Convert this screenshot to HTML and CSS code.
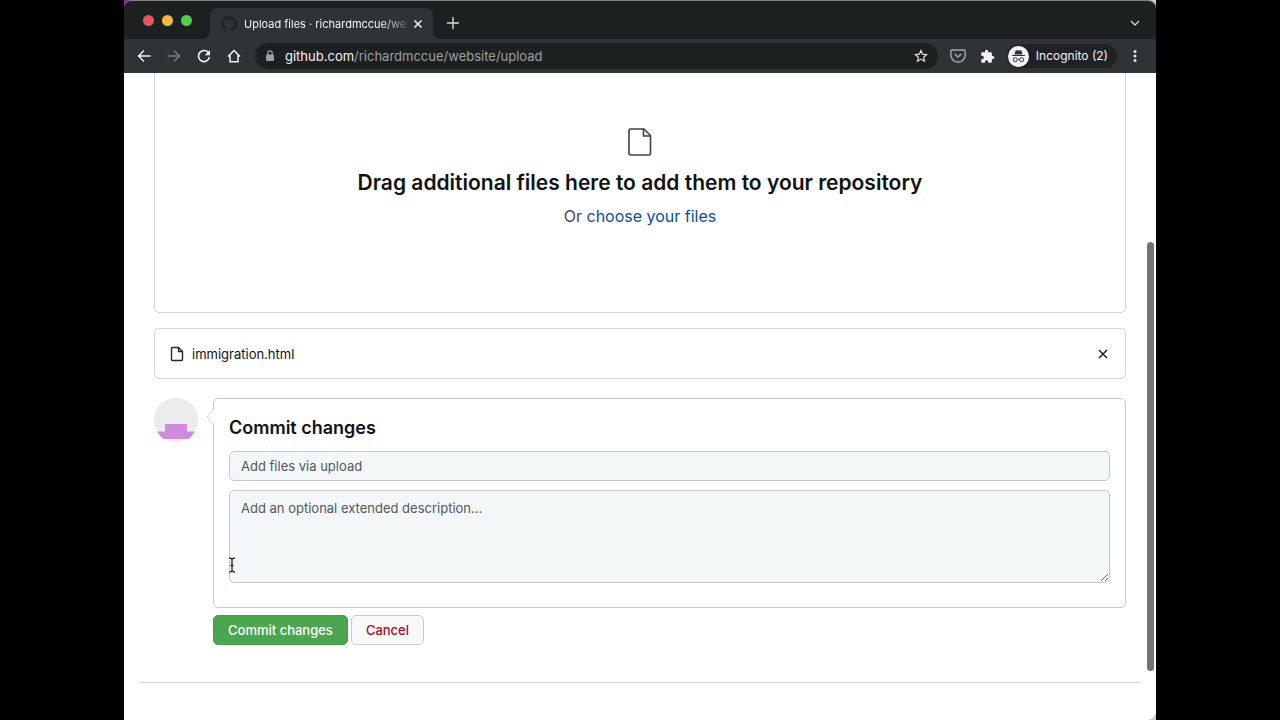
FILE: index.html
```html
<!DOCTYPE html>
<html lang="en">
<head>
    <meta charset="utf-8">
    <title>Upload files · richardmccue/website</title>
    <meta name="viewport" content="width=device-width, initial-scale=1">
    <link rel="stylesheet" href="styles.css">
</head>
<body>
    <div class="window">
        <header class="browser">
            <div class="tabstrip">
                <div class="lights">
                    <span class="light red"></span>
                    <span class="light yellow"></span>
                    <span class="light green"></span>
                </div>
                <div class="tab">
                    <svg class="favicon" width="16" height="16" viewBox="0 0 16 16"><path fill="#202426" d="M8 0C3.58 0 0 3.58 0 8c0 3.54 2.29 6.53 5.47 7.59.4.07.55-.17.55-.38 0-.19-.01-.82-.01-1.49-2.01.37-2.53-.49-2.69-.94-.09-.23-.48-.94-.82-1.13-.28-.15-.68-.52-.01-.53.63-.01 1.08.58 1.23.82.72 1.21 1.87.87 2.33.66.07-.52.28-.87.51-1.07-1.78-.2-3.64-.89-3.64-3.95 0-.87.31-1.59.82-2.15-.08-.2-.36-1.02.08-2.12 0 0 .67-.21 2.2.82.64-.18 1.32-.27 2-.27s1.36.09 2 .27c1.53-1.04 2.2-.82 2.2-.82.44 1.1.16 1.92.08 2.12.51.56.82 1.27.82 2.15 0 3.07-1.87 3.75-3.65 3.95.29.25.54.73.54 1.48 0 1.07-.01 1.93-.01 2.2 0 .21.15.46.55.38A8.01 8.01 0 0 0 16 8c0-4.42-3.58-8-8-8z"/></svg>
                    <span class="tab-title">Upload files · richardmccue/we</span>
                    <button class="icon-btn" type="button" aria-label="Close tab">
                        <svg width="10" height="10" viewBox="0 0 10 10"><path d="M1.500 1.500l7 7M8.500 1.500l-7 7" stroke="#f1f3f4" stroke-width="1.500"/></svg>
                    </button>
                </div>
                <button class="icon-btn new-tab" type="button" aria-label="New tab">
                    <svg width="12" height="12" viewBox="0 0 12 12"><path d="M6 0v12M0 6h12" stroke="#d8dadc" stroke-width="1.400"/></svg>
                </button>
                <button class="icon-btn tab-search" type="button" aria-label="Search tabs">
                    <svg width="10" height="6" viewBox="0 0 10 6"><path d="M1 1l4 4 4-4" fill="none" stroke="#d5d8da" stroke-width="1.300"/></svg>
                </button>
            </div>
            <div class="toolbar">
                <nav class="nav">
                    <button class="icon-btn" type="button" aria-label="Back">
                        <svg width="14" height="14" viewBox="0 0 14 14"><path d="M13.500 7H2M7 1.500L1.500 7 7 12.500" fill="none" stroke="#f1f3f4" stroke-width="1.400"/></svg>
                    </button>
                    <button class="icon-btn" type="button" aria-label="Forward">
                        <svg width="14" height="14" viewBox="0 0 14 14"><path d="M.5 7H12M7 1.500L12.500 7 7 12.500" fill="none" stroke="#7b7f82" stroke-width="1.300"/></svg>
                    </button>
                    <button class="icon-btn" type="button" aria-label="Reload">
                        <svg width="14" height="14" viewBox="0 0 14 14"><path d="M11.600 4A5.500 5.500 0 1 0 12.400 8.200" fill="none" stroke="#f1f3f4" stroke-width="1.600"/><path d="M13 1v5.200H7.800z" fill="#f1f3f4"/></svg>
                    </button>
                    <button class="icon-btn" type="button" aria-label="Home">
                        <svg width="14" height="14" viewBox="0 0 14 14"><path d="M1 7.500L7 1.500l6 6M3 6v6.700h8V6" fill="none" stroke="#f1f3f4" stroke-width="1.500"/></svg>
                    </button>
                </nav>
                <div class="address">
                    <svg width="8" height="12" viewBox="0 0 8 12"><rect y="4.500" width="8" height="6.500" rx="1" fill="#9da1a4"/><path d="M1.800 5V3a2.200 2.200 0 0 1 4.400 0v2" fill="none" stroke="#9da1a4" stroke-width="1.200"/></svg>
                    <span class="url"><span class="host">github.com</span>/richardmccue/website/upload</span>
                    <button class="icon-btn" type="button" aria-label="Bookmark this page">
                        <svg width="14" height="14" viewBox="0 0 14 14"><path d="M7 1.500l1.600 3.700 4 .4-3 2.700.9 3.900L7 10.100l-3.500 2.100.9-3.900-3-2.700 4-.4z" fill="none" stroke="#dfe1e3" stroke-width="1.200"/></svg>
                    </button>
                </div>
                <button class="icon-btn pocket" type="button" aria-label="Pocket">
                    <svg width="16" height="14" viewBox="0 0 16 14"><path d="M2 1h12q1.200 0 1.200 1.200V6A7.200 7 0 0 1 .8 6V2.200Q.8 1 2 1z" fill="none" stroke="#a5a9ac" stroke-width="1.400"/><path d="M4.800 5L8 8l3.200-3" fill="none" stroke="#a5a9ac" stroke-width="1.500"/></svg>
                </button>
                <button class="icon-btn" type="button" aria-label="Extensions">
                    <svg width="15" height="15" viewBox="0 0 24 24"><path fill="#f1f3f4" d="M20.500 11H19V7c0-1.100-.9-2-2-2h-4V3.500a2.500 2.500 0 0 0-5 0V5H4c-1.100 0-2 .9-2 2v3.800h1.500a2.700 2.700 0 0 1 0 5.400H2V20c0 1.100.9 2 2 2h3.800v-1.500a2.700 2.700 0 0 1 5.400 0V22H17c1.100 0 2-.9 2-2v-4h1.500a2.500 2.500 0 0 0 0-5z"/></svg>
                </button>
                <button class="incognito" type="button">
                    <svg width="21" height="21" viewBox="0 0 21 21"><circle cx="10.500" cy="10.500" r="10.500" fill="#f1f3f4"/><path d="M6.500 8.500L7.500 4.800q.3-.8 1-.6l2 .4 2-.4q.7-.2 1 .6l1 3.700z" fill="#303236"/><path d="M4 9.500h13" stroke="#303236"/><path d="M9.400 13.600q1.100-.8 2.200 0" fill="none" stroke="#303236"/><circle cx="7.300" cy="13.700" r="2" fill="none" stroke="#303236"/><circle cx="13.700" cy="13.700" r="2" fill="none" stroke="#303236"/></svg>
                    Incognito (2)
                </button>
                <button class="icon-btn" type="button" aria-label="Menu">
                    <svg width="4" height="14" viewBox="0 0 4 14" fill="#e3e5e6"><circle cx="2" cy="2.500" r="1.500"/><circle cx="2" cy="7" r="1.500"/><circle cx="2" cy="11.500" r="1.500"/></svg>
                </button>
            </div>
        </header>

        <main class="page">
            <section class="dropzone">
                <svg width="28" height="28" viewBox="0 0 28 28"><path d="M4.500 1h13.500l6.500 6.500v18q0 1.500-1.500 1.500H4.500Q3 27 3 25.500v-23Q3 1 4.500 1z" fill="none" stroke="#3c434a" stroke-width="1.600"/><path d="M17.500 1v7h7" fill="none" stroke="#3c434a" stroke-width="1.600"/></svg>
                <h1 class="drop-title">Drag additional files here to add them to your repository</h1>
                <p class="drop-text">Or <a class="link" href="#">choose your files</a></p>
            </section>

            <section class="file">
                <svg width="14" height="16" viewBox="0 0 14 16"><path d="M2.500 1.500h6L12.500 5.500v8q0 1-1 1h-9q-1 0-1-1v-11q0-1 1-1z" fill="none" stroke="#24292f" stroke-width="1.400"/><path d="M8.500 1.500V5.500h4" fill="none" stroke="#24292f" stroke-width="1.400"/></svg>
                <span class="file-name">immigration.html</span>
                <button class="icon-btn" type="button" aria-label="Remove this file">
                    <svg width="10" height="10" viewBox="0 0 10 10"><path d="M1 1l8 8M9 1L1 9" stroke="#1b1f24" stroke-width="1.500"/></svg>
                </button>
            </section>

            <form class="commit" action="#">
                <svg class="avatar" width="44" height="44" viewBox="0 0 44 44"><circle cx="22" cy="22" r="22" fill="#ececec"/><path d="M11 26h22v7.500h7.700Q38.500 38 34.500 41H9.500Q5.500 38 3.300 33.500H11z" fill="#ce8cdb"/></svg>
                <div class="commit-main">
                    <div class="commit-box">
                        <svg class="caret" width="8" height="16" viewBox="0 0 8 16"><path d="M8 0L1 8l7 8" fill="#fff" stroke="#d0d7de"/></svg>
                        <h2 class="commit-title">Commit changes</h2>
                        <input class="field" type="text" placeholder="Add files via upload" aria-label="Commit summary">
                        <textarea class="field description" placeholder="Add an optional extended description..." aria-label="Commit description"></textarea>
                        <svg class="cursor" width="8" height="16" viewBox="0 0 8 16"><path d="M1 1q3 0 3 2 0-2 3-2M4 3v10M1 15q3 0 3-2 0 2 3 2M2.500 8.500h3" fill="none" stroke="#fff" stroke-width="3"/><path d="M1 1q3 0 3 2 0-2 3-2M4 3v10M1 15q3 0 3-2 0 2 3 2M2.500 8.500h3" fill="none" stroke="#222" stroke-width="1.300"/></svg>
                    </div>
                    <div class="actions">
                        <button class="btn primary" type="submit">Commit changes</button>
                        <button class="btn danger" type="button">Cancel</button>
                    </div>
                </div>
            </form>
            <hr class="divider">
        </main>
        <div class="scrollbar"></div>
    </div>
</body>
</html>
```
FILE: styles.css
```css
* {
    box-sizing: border-box;
}
body {
    margin: 0;
    background: #000;
    color: #101214;
    font-family: Inter, "Liberation Sans", sans-serif;
    font-size: 13px;
    line-height: 20px;
    overflow: hidden;
}
button, input, textarea {
    font: inherit;
}
button {
    cursor: pointer;
}
h1, h2, p {
    margin: 0;
}
svg {
    display: block;
    flex: none;
}
.window {
    position: relative;
    min-height: 100vh;
    margin: 0 124px;
    background: linear-gradient(135deg, #8b2d88 8px, #c9cfcd 8px);
}

/* browser chrome */
.browser {
    color: #f1f3f4;
    font-size: 12px;
    border-top: 1px solid #7d8583;
    border-radius: 8px 8px 0 0;
    overflow: hidden;
}
.tabstrip {
    display: flex;
    align-items: flex-end;
    height: 38px;
    background: #1c2021;
}
.lights {
    display: flex;
    gap: 8px;
    width: 86px;
    padding: 0 0 13px 19px;
}
.light {
    width: 11px;
    height: 11px;
    border-radius: 50%;
}
.red {
    background: #e4575a;
}
.yellow {
    background: #f0b74b;
}
.green {
    background: #57cb4c;
}
.tab {
    position: relative;
    display: flex;
    align-items: center;
    gap: 7px;
    width: 223px;
    height: 31px;
    padding: 0 10px 0 11px;
    background: #2f3335;
    border-radius: 8px 8px 0 0;
}
.tab::before, .tab::after {
    content: "";
    position: absolute;
    bottom: 0;
    width: 8px;
    height: 8px;
}
.tab::before {
    right: 100%;
    background: radial-gradient(circle at 0 0, transparent 8px, #2f3335 8px);
}
.tab::after {
    left: 100%;
    background: radial-gradient(circle at 100% 0, transparent 8px, #2f3335 8px);
}
.tab-title {
    flex: 1;
    font-size: 11px;
    white-space: nowrap;
    -webkit-mask-image: linear-gradient(to right, #000 85%, transparent 105%);
    mask-image: linear-gradient(to right, #000 85%, transparent 105%);
}
.icon-btn {
    display: flex;
    padding: 0;
    border: 0;
    background: none;
}
.new-tab {
    margin: 0 0 10px 14px;
}
.tab-search {
    margin: 0 16px 13px auto;
}
.toolbar {
    display: flex;
    align-items: center;
    gap: 12px;
    height: 34px;
    padding: 0 19px 0 13px;
    background: #2f3335;
}
.nav {
    display: flex;
    gap: 16px;
    margin-right: 2px;
}
.address {
    display: flex;
    flex: 1;
    align-items: center;
    gap: 11px;
    height: 26px;
    padding: 0 10px 0 11px;
    background: #1c2021;
    border-radius: 13px;
}
.url {
    flex: 1;
    color: #9da1a4;
    font-size: 13px;
}
.host {
    color: #f1f3f4;
}
.pocket {
    margin-right: 2px;
}
.incognito {
    display: flex;
    align-items: center;
    gap: 7px;
    height: 24px;
    margin-right: 4px;
    padding: 0 9px 0 1px;
    border: 0;
    border-radius: 12px;
    background: #202124;
    color: #f1f3f4;
}

/* upload page */
.page {
    min-height: calc(100vh - 73px);
    padding: 0 30px 37px;
    background: #fff;
    border-radius: 0 0 9px 0;
}
.dropzone {
    display: flex;
    flex-direction: column;
    align-items: center;
    height: 240px;
    padding-top: 55px;
    border: 1px solid #d0d3d7;
    border-top: 0;
    border-radius: 0 0 5px 5px;
}
.drop-title {
    margin-top: 12px;
    font-size: 21px;
    font-weight: 600;
    line-height: 30px;
}
.drop-text {
    margin-top: 6px;
    color: #424a53;
    font-size: 16px;
    line-height: 24px;
}
.link {
    color: #0b4aa5;
    text-decoration: none;
}
.file {
    display: flex;
    align-items: center;
    gap: 8px;
    height: 51px;
    margin-top: 15px;
    padding: 0 17px 0 15px;
    border: 1px solid #d0d3d7;
    border-radius: 5px;
}
.file-name {
    flex: 1;
}
.commit {
    display: flex;
    gap: 15px;
    margin-top: 19px;
}
.commit-main {
    flex: 1;
}
.commit-box {
    position: relative;
    height: 210px;
    padding: 16px 15px;
    border: 1px solid #c6cacf;
    border-radius: 5px;
}
.caret {
    position: absolute;
    top: 10px;
    left: -8px;
}
.commit-title {
    margin-bottom: 10px;
    font-size: 18px;
    font-weight: 600;
    line-height: 26px;
}
.field {
    display: block;
    width: 100%;
    height: 30px;
    padding: 4px 11px;
    border: 1px solid #c6cacf;
    border-radius: 5px;
    outline: 0;
    background: #f4f7f8;
}
.field::placeholder {
    color: #50585f;
    opacity: 1;
}
.description {
    height: 93px;
    margin-top: 9px;
    padding-top: 7px;
    resize: vertical;
}
.cursor {
    position: absolute;
    top: 158px;
    left: 14px;
}
.actions {
    display: flex;
    gap: 3px;
    margin-top: 7px;
}
.btn {
    height: 30px;
    padding: 0 14px;
    border: 1px solid #c6cacf;
    border-radius: 5px;
    font-weight: 500;
}
.primary {
    border-color: #459a4b;
    background: #4ba64f;
    color: #fff;
}
.danger {
    background: #f6f8fa;
    color: #a40e26;
}
.divider {
    height: 1px;
    margin: 37px -15px 0;
    border: 0;
    background: #cfd1d4;
}
.scrollbar {
    position: absolute;
    top: 242px;
    right: 2px;
    width: 7px;
    height: 429px;
    border-radius: 4px;
    background: #737373;
}
```
